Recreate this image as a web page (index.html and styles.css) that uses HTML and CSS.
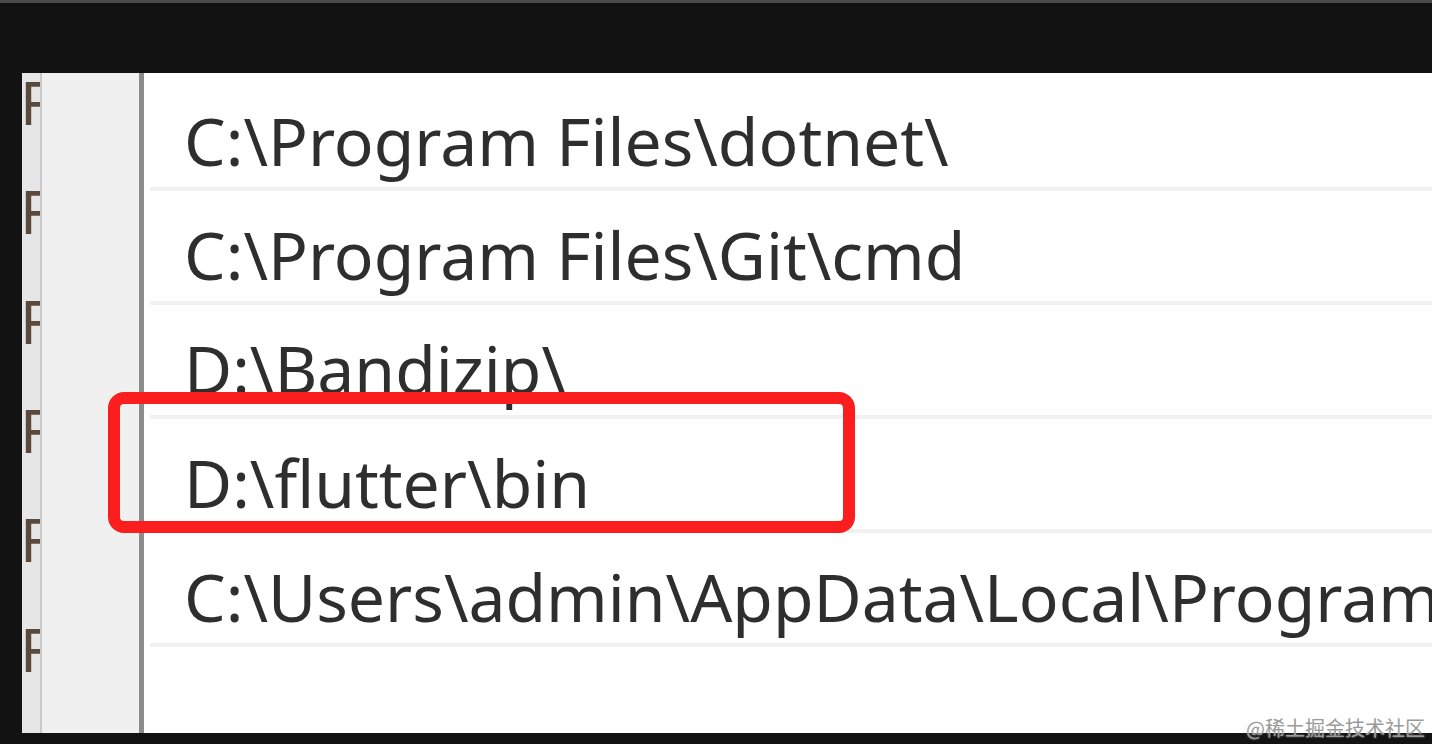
FILE: index.html
```html
<!DOCTYPE html>
<html lang="en">
<head>
<meta charset="utf-8">
<title>Path</title>
<link rel="stylesheet" href="styles.css">
</head>
<body>
<div class="screen">
  <div class="topbar">
    <div class="tabline"></div>
  </div>
  <div class="main">
    <div class="edge"></div>
    <div class="names">
      <span class="cut">F</span>
      <span class="cut">F</span>
      <span class="cut">F</span>
      <span class="cut">F</span>
      <span class="cut">F</span>
      <span class="cut">F</span>
    </div>
    <div class="panel"></div>
    <div class="list">
      <div class="row"><span class="path">C:\Program Files\dotnet\</span></div>
      <div class="row"><span class="path">C:\Program Files\Git\cmd</span></div>
      <div class="row"><span class="path">D:\Bandizip\</span></div>
      <div class="row"><span class="path">D:\flutter\bin</span></div>
      <div class="row"><span class="path">C:\Users\admin\AppData\Local\Programs\Microsoft VS Code\bin</span></div>
    </div>
    <div class="highlight"></div>
  </div>
  <div class="bottombar"></div>
  <div class="watermark">@稀土掘金技术社区</div>
</div>
</body>
</html>
```

FILE: styles.css
```css
html, body {
  margin: 0;
  padding: 0;
  background: #121212;
}

.screen {
  position: relative;
  width: 1432px;
  height: 744px;
  overflow: hidden;
  display: flex;
  flex-direction: column;
  background: #121212;
}

.topbar {
  height: 73px;
  flex: none;
  background: #121212;
}

.tabline {
  height: 3px;
  background: #4b4b4b;
}

.main {
  position: relative;
  flex: none;
  height: 660px;
  display: flex;
  background: #ffffff;
  box-shadow: inset 0 2px 2px rgba(0,0,0,0.4);
}

.edge {
  width: 22px;
  flex: none;
  background: #121212;
}

.names {
  width: 18px;
  flex: none;
  background: #e6e6e6;
  border-right: 2px solid #c9c9c9;
  overflow: hidden;
  display: flex;
  flex-direction: column;
  padding-top: 4px;
}

.cut {
  display: block;
  height: 112px;
  font-family: "Noto Sans", sans-serif;
  font-size: 60px;
  line-height: 50px;
  color: #5a4a3e;
  margin-left: -2px;
}

.panel {
  width: 97px;
  flex: none;
  background: #f0f0f0;
  border-right: 5px solid #8c8c8c;
}

.list {
  flex: 1;
  background: #ffffff;
  padding-top: 4px;
  overflow: hidden;
}

.row {
  height: 110px;
  margin-left: 6px;
  border-bottom: 4px solid #f1f1f1;
  padding-left: 34px;
  display: flex;
  align-items: center;
  white-space: nowrap;
}

.path {
  font-family: "Noto Sans", sans-serif;
  font-size: 66px;
  color: #2e2e2e;
  line-height: 1;
  padding-top: 16px;
}

.highlight {
  position: absolute;
  left: 108px;
  top: 319px;
  width: 723px;
  height: 117px;
  border: 12px solid #fa1e1e;
  border-radius: 16px;
}

.bottombar {
  flex: 1;
  background: #121212;
}

.watermark {
  position: absolute;
  right: 7px;
  bottom: 5px;
  font-family: "Noto Sans CJK SC", sans-serif;
  font-size: 20px;
  line-height: 22px;
  color: #9a9a9a;
  text-shadow: 0 0 2px rgba(255,255,255,0.6);
}
```
